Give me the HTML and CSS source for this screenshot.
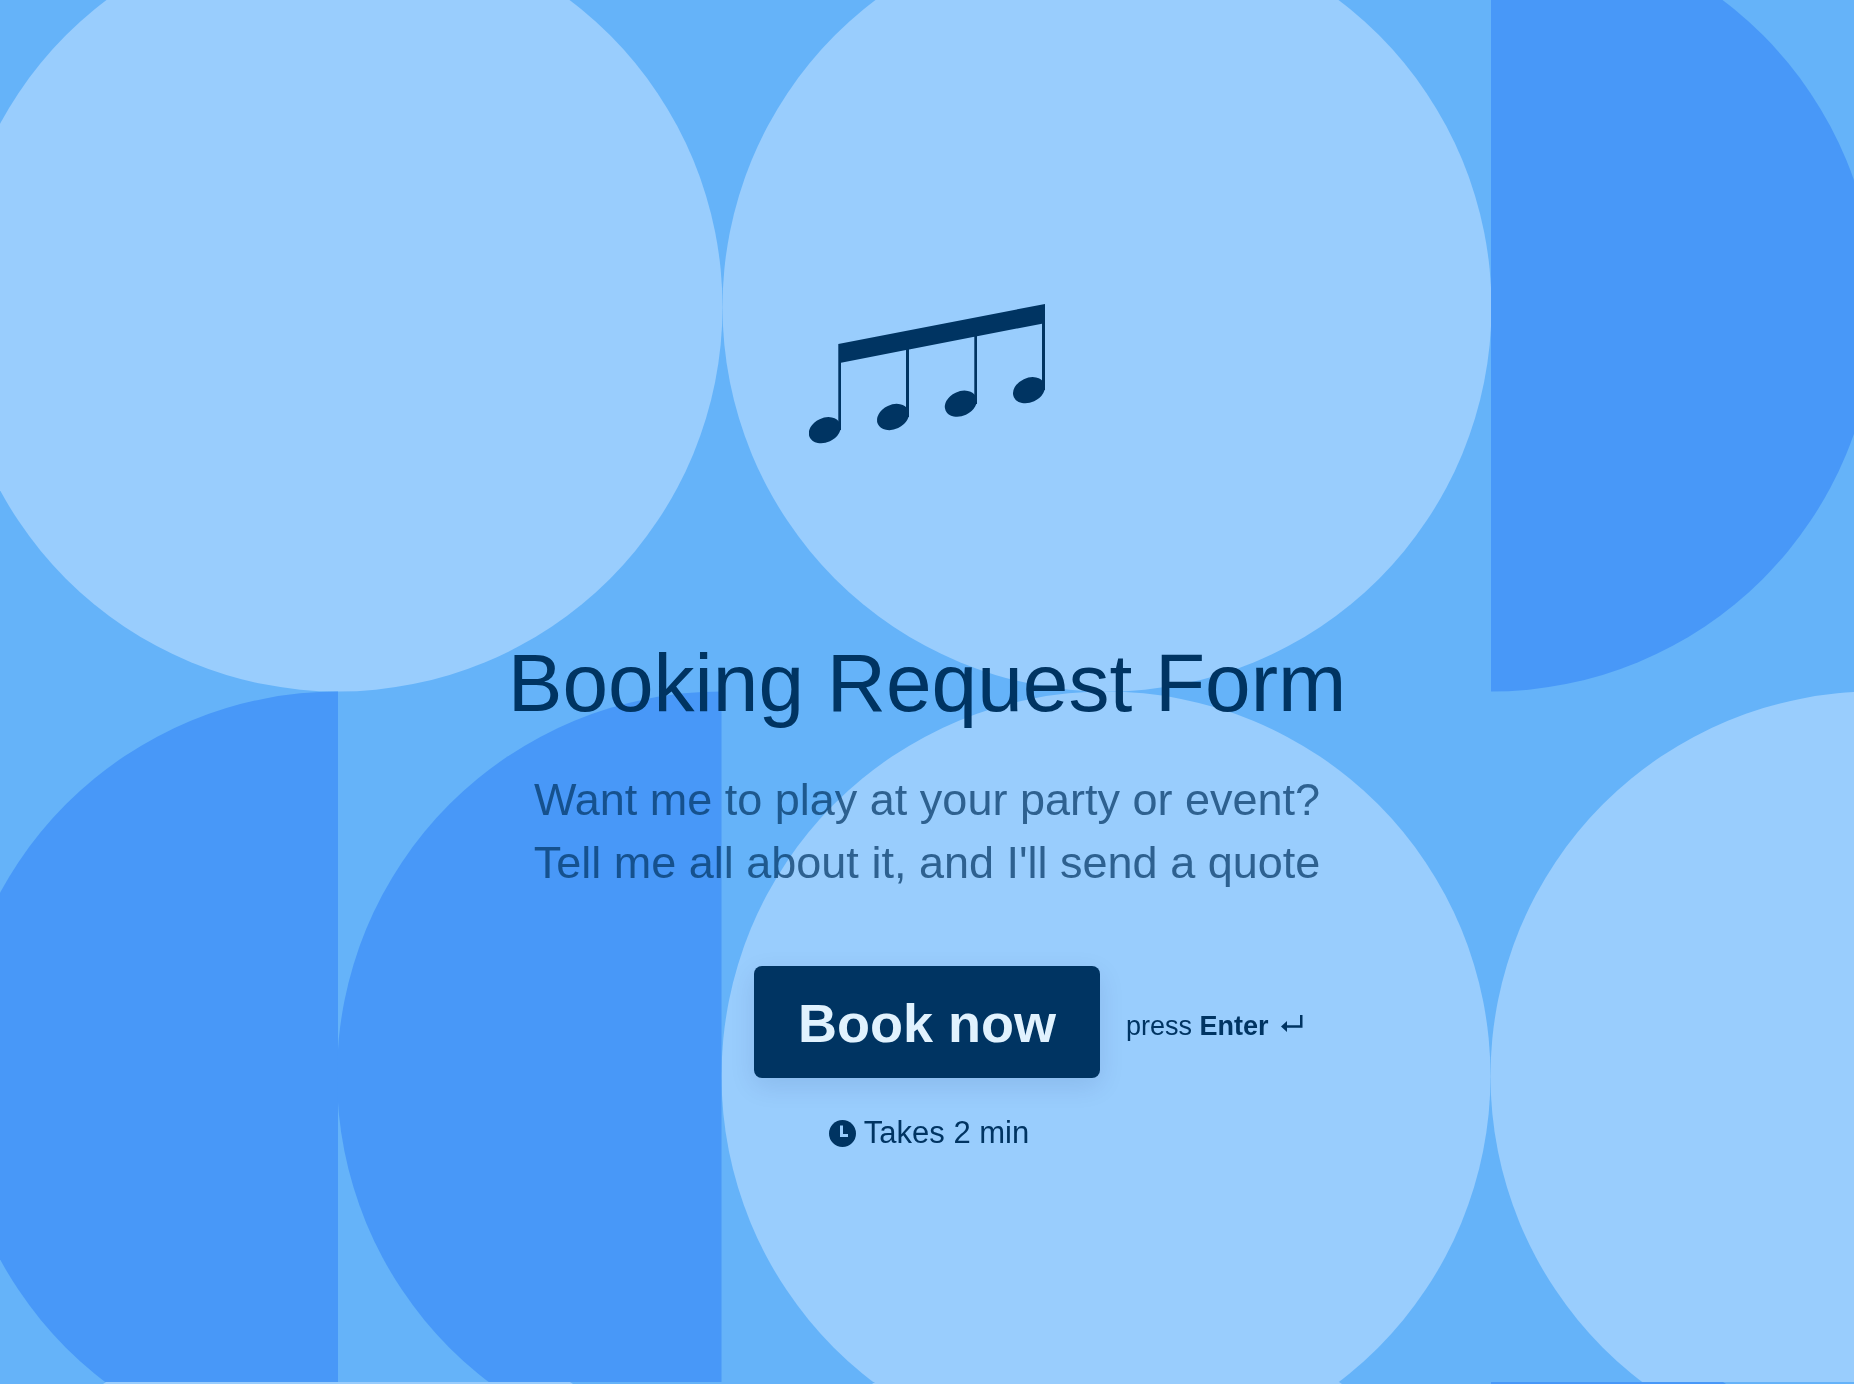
FILE: index.html
```
<!DOCTYPE html>
<html lang="en">
  <head>
    <meta charset="utf-8">
    <meta name="viewport" content="width=device-width, initial-scale=1">
    <title>Booking Request Form</title>
    <link rel="stylesheet" href="styles.css">
  </head>
  <body>
    <svg class="backdrop" viewBox="0 0 1854 1384" preserveAspectRatio="xMidYMid slice" aria-hidden="true">
      <g class="light">
        <circle cx="338" cy="307" r="384.5" />
        <circle cx="1107" cy="307" r="384.5" />
        <circle cx="1106" cy="1076" r="384.5" />
        <circle cx="1875" cy="1076" r="384.5" />
      </g>
      <g class="dark">
        <path d="M1491 -77.5a384.5 384.5 0 0 1 0 769z" />
        <path d="M338 691.5a384.5 384.5 0 0 0 0 769z" />
        <path d="M721.500 691.5a384.5 384.5 0 0 0 0 769z" />
      </g>
      <!-- first rows of the next tile -->
      <rect class="base" x="0" y="1382" width="1854" height="2" />
      <path class="light" d="M106 1382h464l3 2H103zM875 1382h464l3 2H872z" />
      <path class="dark" d="M1491 1382h232l3 2h-235z" />
    </svg>

    <main class="welcome">
      <svg class="notes" viewBox="0 0 236 140" role="img" aria-label="Music notes">
        <path d="M29.300 40L236 0V86H233V19.700L168 32.300V100H165.300V32.800L100 45.500V113H97V46L32 58.700V126H29.300z" />
        <ellipse cx="15.800" cy="126.200" rx="16.700" ry="12.200" transform="rotate(-25 15.800 126.200)" />
        <ellipse cx="84" cy="113" rx="16.700" ry="12.200" transform="rotate(-25 84 113)" />
        <ellipse cx="151.800" cy="99.700" rx="16.700" ry="12.200" transform="rotate(-25 151.800 99.700)" />
        <ellipse cx="220" cy="86.200" rx="16.700" ry="12.200" transform="rotate(-25 220 86.200)" />
      </svg>

      <h1>Booking Request Form</h1>
      <p class="intro">Want me to play at your party or event?<br>Tell me all about it, and I'll send a quote</p>

      <div class="actions">
        <button class="button" id="start" type="button">Book now</button>
        <div class="hint">
          <span>press <strong>Enter</strong></span>
          <svg class="enter" viewBox="0 0 22 18" aria-hidden="true">
            <path d="M0 11.500L6 6V10.300H19V0H21.500V12.800H6V17z" />
          </svg>
        </div>
      </div>

      <div class="duration">
        <svg class="clock" viewBox="0 0 27 27" aria-hidden="true">
          <circle cx="13.500" cy="13.500" r="13.500" />
          <path d="M12.500 5.500V15.500H19" />
        </svg>
        <span>Takes 2 min</span>
      </div>
    </main>
  </body>
</html>
```
FILE: styles.css
```
* {
  box-sizing: border-box;
}
body {
  margin: 0;
  font-family: "Liberation Sans", Arial, sans-serif;
  color: #003462;
  background-color: #65b3f9;
}
.backdrop {
  position: fixed;
  inset: 0;
  width: 100%;
  height: 100%;
  z-index: -1;
}
.base {
  fill: #65b3f9;
}
.light {
  fill: #99cdfd;
}
.dark {
  fill: #4898f8;
}
.welcome {
  display: flex;
  flex-direction: column;
  align-items: center;
  justify-content: center;
  min-height: 100vh;
  padding-top: 73px;
  text-align: center;
}
.notes {
  width: 236px;
  height: 140px;
  margin-bottom: 187px;
  fill: currentColor;
}
h1 {
  margin: 0 0 33px;
  font-size: 82px;
  font-weight: normal;
  line-height: 104px;
}
.intro {
  margin: 0 0 72px;
  font-size: 45px;
  line-height: 63px;
  opacity: 0.7;
}
.actions {
  display: grid;
  grid-template-columns: 1fr auto 1fr;
  align-items: center;
  width: 100%;
  margin-bottom: 35px;
}
.button {
  grid-column: 2;
  padding: 26px 44px 24px;
  border: none;
  border-radius: 8px;
  font-family: inherit;
  font-size: 54px;
  font-weight: bold;
  line-height: 62px;
  color: #e1f2fe;
  background-color: #003462;
  box-shadow: 0 8px 26px rgba(0, 20, 90, 0.1);
  cursor: pointer;
}
.button:hover {
  background-color: #1f4e7a;
}
.hint {
  display: flex;
  align-items: center;
  gap: 12px;
  padding: 8px 0 0 26px;
  font-size: 27px;
  line-height: 32px;
}
.enter {
  width: 22px;
  height: 18px;
  margin-bottom: 4px;
  fill: currentColor;
}
.duration {
  display: flex;
  align-items: center;
  gap: 8px;
  padding-left: 4px;
  font-size: 31px;
  line-height: 40px;
}
.clock {
  width: 27px;
  height: 27px;
  fill: currentColor;
}
.clock path {
  fill: none;
  stroke: #99cdfd;
  stroke-width: 3;
}
```
